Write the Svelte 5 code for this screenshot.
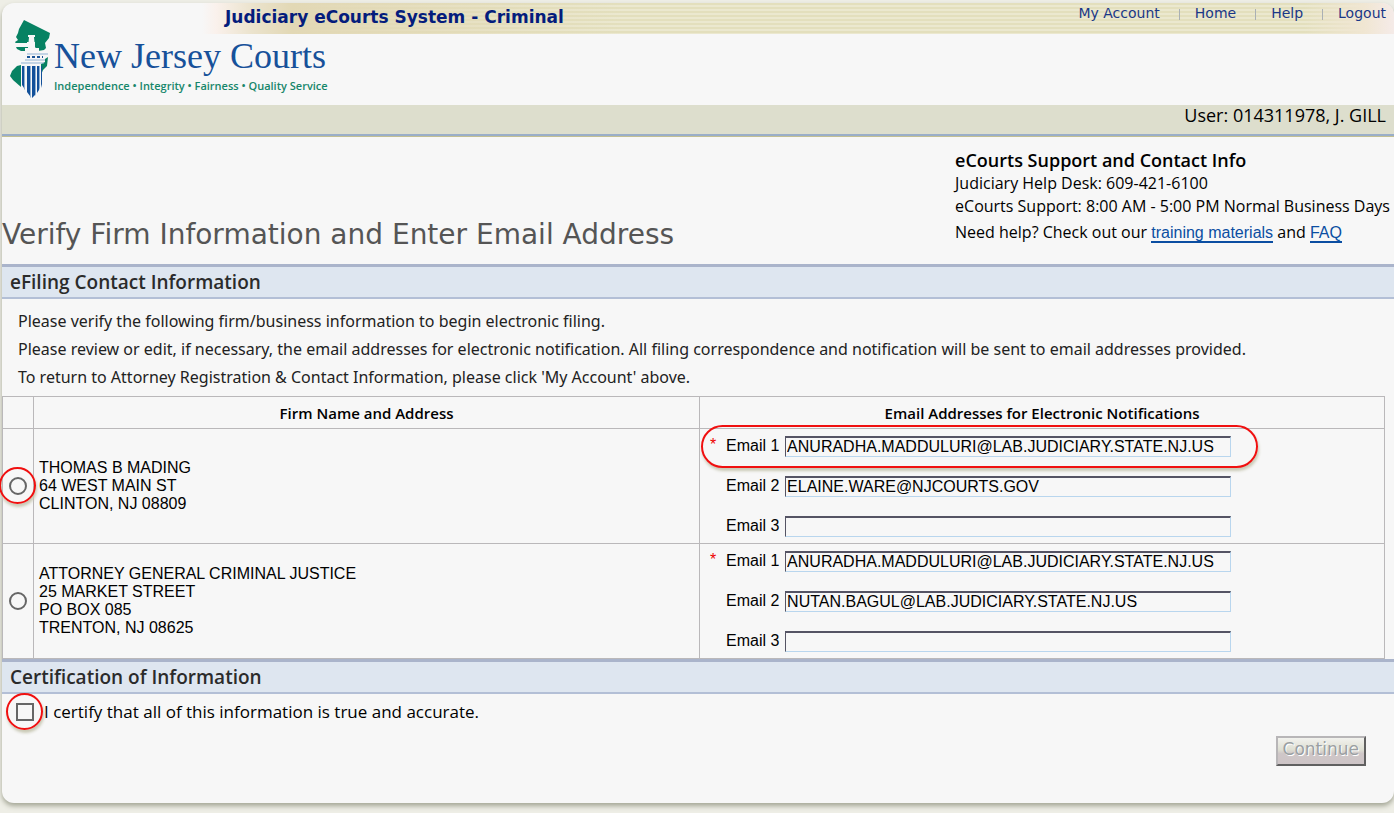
<script lang="ts">
	type Firm = { id: string; address: string[]; emails: string[]; highlight: boolean };

	const navLinks = ['My Account', 'Home', 'Help', 'Logout'];

	let firms = $state<Firm[]>([
		{
			id: 'mading',
			address: ['THOMAS B MADING', '64 WEST MAIN ST', 'CLINTON, NJ 08809'],
			emails: ['ANURADHA.MADDULURI@LAB.JUDICIARY.STATE.NJ.US', 'ELAINE.WARE@NJCOURTS.GOV', ''],
			highlight: true
		},
		{
			id: 'ag',
			address: [
				'ATTORNEY GENERAL CRIMINAL JUSTICE',
				'25 MARKET STREET',
				'PO BOX 085',
				'TRENTON, NJ 08625'
			],
			emails: [
				'ANURADHA.MADDULURI@LAB.JUDICIARY.STATE.NJ.US',
				'NUTAN.BAGUL@LAB.JUDICIARY.STATE.NJ.US',
				''
			],
			highlight: false
		}
	]);

	let selected = $state('');
	let certified = $state(false);
</script>

<div class="panel">
	<header>
		<div class="topbar">
			<div class="system">Judiciary eCourts System - Criminal</div>
			<nav>
				{#each navLinks as link (link)}
					<a href="#top">{link}</a>
				{/each}
			</nav>
		</div>
		<div class="brand">
			<svg class="emblem" width="42" height="80" viewBox="0 0 42 80" aria-hidden="true">
				<path fill="#078263" d="M14 0 40 13 39 18 35 23 36 28 34 30 28 31 25 27V22H17V25H7L5 22 8 20 6 17 8 13 9 9Z" />
				<path fill="#078263" d="M6 27h13l-3 4h-5l-4-2Z" />
				<path fill="#078263" d="M11 45v22L3 60 0 56 2 51 7 46Z" />
				<path fill="#078263" d="M38 37 37 46 33 50 31 55V44l4-2V39Z" />
				<path fill="#f7f7f7" d="M18 15h7v2h-1l1 11h4v3H15v-3h3l1-11h-1Z" />
				<path fill="#f7f7f7" d="M4 23h14v2H4Z" />
				<path stroke="#8fb1d2" stroke-width="1" d="M17 34h21M15 40h20M11 43h23" />
				<path stroke="#1b5597" stroke-width="2" stroke-dasharray="3 2" d="M17 37h16" />
				<path fill="#12509a" d="M12 46h2v22l-2-3ZM17 46h3v30l-3-4ZM22 46h3v29l-3 3ZM27 46h2v24l-2 3ZM31 46h1v18l-1 4Z" />
				<path fill="#8fb1d2" d="M14 46h1v24l-1-1ZM20 46h1v32l-1-1ZM25 46h1v28l-1 2ZM29 46h1v22l-1 2Z" />
			</svg>
			<div class="wordmark">
				<div class="name">New Jersey Courts</div>
				<div class="tagline">Independence • Integrity • Fairness • Quality Service</div>
			</div>
		</div>
		<div class="userbar">User: 014311978, J. GILL</div>
	</header>

	<div class="intro">
		<h1>Verify Firm Information and Enter Email Address</h1>
		<div class="support">
			<h2>eCourts Support and Contact Info</h2>
			<p>Judiciary Help Desk: 609-421-6100</p>
			<p>eCourts Support: 8:00 AM - 5:00 PM Normal Business Days</p>
			<p class="help">
				Need help? Check out our <a href="#training">training materials</a> and <a href="#faq">FAQ</a>
			</p>
		</div>
	</div>

	<h3>eFiling Contact Information</h3>
	<div class="notes">
		<p>Please verify the following firm/business information to begin electronic filing.</p>
		<p>Please review or edit, if necessary, the email addresses for electronic notification. All filing correspondence and notification will be sent to email addresses provided.</p>
		<p>To return to Attorney Registration &amp; Contact Information, please click 'My Account' above.</p>
	</div>

	<table>
		<colgroup>
			<col class="col-pick" />
			<col class="col-firm" />
			<col />
		</colgroup>
		<thead>
			<tr>
				<th></th>
				<th>Firm Name and Address</th>
				<th>Email Addresses for Electronic Notifications</th>
			</tr>
		</thead>
		<tbody>
			{#each firms as firm (firm.id)}
				<tr>
					<td class="pick">
						<span class="mark" class:ringed={firm.highlight}>
							<input type="radio" name="firm" id={firm.id} value={firm.id} bind:group={selected} />
						</span>
					</td>
					<td class="address">
						<label for={firm.id}>
							{#each firm.address as line}
								<span>{line}</span>
							{/each}
						</label>
					</td>
					<td class="emails">
						{#each firm.emails as _, i}
							<div class="email" class:outlined={firm.highlight && i === 0}>
								<span class="required">{i === 0 ? '*' : ''}</span>
								<label for="{firm.id}-email-{i}">Email {i + 1}</label>
								<input type="text" id="{firm.id}-email-{i}" bind:value={firm.emails[i]} />
							</div>
						{/each}
					</td>
				</tr>
			{/each}
		</tbody>
	</table>

	<h3>Certification of Information</h3>
	<div class="certify">
		<span class="mark ringed">
			<input type="checkbox" id="certify" bind:checked={certified} />
		</span>
		<label for="certify">I certify that all of this information is true and accurate.</label>
	</div>
	<div class="actions">
		<button type="button" disabled={!certified}>Continue</button>
	</div>
</div>

<style>
	:global(body) {
		background: #eeeee6;
	}

	.panel {
		--trebuchet: 'Trebuchet MS', 'Open Sans', sans-serif;
		--verdana: Verdana, 'DejaVu Sans', sans-serif;
		--arial: 'Liberation Sans', Arial, sans-serif;
		margin: 3px 0 10px 2px;
		background: #f7f7f7;
		border-radius: 12px;
		box-shadow: 0 3px 5px #a5a797;
		font-family: var(--trebuchet);
		font-size: 16px;
		color: #000;
	}

	h1,
	h2,
	h3,
	p {
		margin: 0;
	}

	.topbar {
		display: flex;
		justify-content: space-between;
		height: 31px;
		margin-left: 200px;
		padding: 0 8px 0 23px;
		border-radius: 0 12px 0 0;
		background:
			linear-gradient(90deg, #f7f7f7, #faf1ec 14px, #ebe3cd 50px, #e2d8b5 90px, transparent 420px, transparent calc(100% - 90px), #f0e6d2 calc(100% - 30px), #f5ebe8),
			repeating-linear-gradient(#e3dfbd 0 2px, #ebe8cf 2px 4px);
		font-family: var(--verdana);
	}

	.system {
		font-size: 17px;
		font-weight: bold;
		line-height: 29px;
		color: #041c7c;
	}

	nav {
		display: flex;
		font-size: 14px;
		line-height: 20px;
	}

	nav a {
		color: #1a3787;
		text-decoration: none;
	}

	nav a + a::before {
		content: '';
		display: inline-block;
		width: 1px;
		height: 11px;
		margin: 0 15px 0 19px;
		background: #aab0b4;
		vertical-align: -2px;
	}

	.brand {
		display: flex;
		gap: 2px;
		height: 71px;
		padding-left: 8px;
	}

	.emblem {
		margin-top: -14px;
	}

	.name {
		font-family: 'Liberation Serif', serif;
		font-size: 36px;
		line-height: 44px;
		color: #17519a;
	}

	.tagline {
		font-size: 11px;
		font-weight: 600;
		line-height: 16px;
		color: #16866a;
	}

	.userbar {
		height: 29px;
		padding-right: 8px;
		background: #dddecd;
		border-bottom: 2px solid #9aaec8;
		box-shadow: 0 1px #c3bf92;
		font-size: 18px;
		line-height: 20px;
		text-align: right;
	}

	.intro {
		display: flex;
		justify-content: space-between;
		align-items: flex-end;
		height: 128px;
	}

	h1 {
		font-family: var(--verdana);
		font-size: 28px;
		font-weight: normal;
		line-height: 34px;
		padding-bottom: 12px;
		color: #555;
	}

	.support {
		padding: 0 4px 20px 0;
		white-space: nowrap;
	}

	h2 {
		font-size: 18px;
		font-weight: 600;
		line-height: 24px;
	}

	.support p {
		line-height: 23px;
	}

	.support .help {
		padding-top: 3px;
	}

	.support a {
		font-family: var(--arial);
		color: #0b4ea2;
		text-decoration: none;
		border-bottom: 2px solid #0b4ea2;
	}

	h3 {
		padding-left: 8px;
		background: #dee6f0;
		border-top: 3px solid #aab4cb;
		border-bottom: 2px solid #b3bfd6;
		font-size: 19px;
		font-weight: 600;
		line-height: 30px;
		color: #2b2b2b;
	}

	.notes {
		padding: 8px 16px 5px;
		font-family: 'Trebuchet MS', 'Noto Sans', sans-serif;
		line-height: 28px;
		color: #222;
	}

	table {
		width: calc(100% - 9px);
		border-collapse: collapse;
		table-layout: fixed;
		font-family: var(--arial);
	}

	.col-pick {
		width: 31px;
	}

	.col-firm {
		width: 48.2%;
	}

	th,
	td {
		padding: 0;
		border: 1px solid #bab8ba;
	}

	th {
		height: 31px;
		font-family: var(--trebuchet);
		font-size: 15px;
		font-weight: 600;
	}

	.mark {
		position: relative;
		display: inline-block;
		width: 18px;
		height: 18px;
	}

	.mark input {
		display: block;
		appearance: none;
		width: 18px;
		height: 18px;
		margin: 0;
		border: 2px solid #666;
		background: #f7f7f7;
	}

	.mark input:checked {
		background: #444;
	}

	.pick input {
		border-radius: 50%;
	}

	.ringed::after,
	.outlined::after {
		content: '';
		position: absolute;
		inset: -10px -9px -9px -10px;
		border: 2px solid #f01010;
		border-radius: 50%;
		box-shadow: 1px 3px 3px #c9c9b5;
		pointer-events: none;
	}

	.pick {
		text-align: center;
		vertical-align: middle;
	}

	.pick .mark {
		vertical-align: middle;
	}

	.address {
		padding-left: 5px;
		line-height: 18px;
	}

	.address span {
		display: block;
	}

	.emails {
		padding: 7px 0 6px 10px;
	}

	.email {
		position: relative;
		display: grid;
		grid-template-columns: 16px 59px 446px;
		height: 21px;
	}

	.email + .email {
		margin-top: 19px;
	}

	.outlined::after {
		inset: -11px auto -11px -9px;
		width: 553px;
		border-radius: 30px;
	}

	.required {
		color: #e00;
		line-height: 18px;
	}

	.email label {
		line-height: 20px;
	}

	.email input {
		box-sizing: border-box;
		height: 21px;
		padding: 0 1px;
		border: 1px solid #b9d6ee;
		border-top: 2px solid #555464;
		border-left: 1px solid #555464;
		background: #f7f7f7;
		font: 16px var(--arial);
		color: #000;
	}

	.certify {
		display: flex;
		gap: 10px;
		padding: 9px 14px 0;
		font-size: 17px;
		line-height: 18px;
	}

	.actions {
		display: flex;
		justify-content: flex-end;
		padding: 15px 28px 37px;
	}

	button {
		height: 30px;
		padding: 0 5px 4px;
		border: 2px solid;
		border-color: #b8b6b8 #606060 #606060 #b8b6b8;
		background: linear-gradient(#f2f2ee, #dedfd3 45%, #cfc7c8 60%, #cdc4c6);
		font: 17px var(--verdana);
	}

	button:disabled {
		color: #9a9fa2;
		text-shadow: 1px 1px #fff;
	}
</style>
